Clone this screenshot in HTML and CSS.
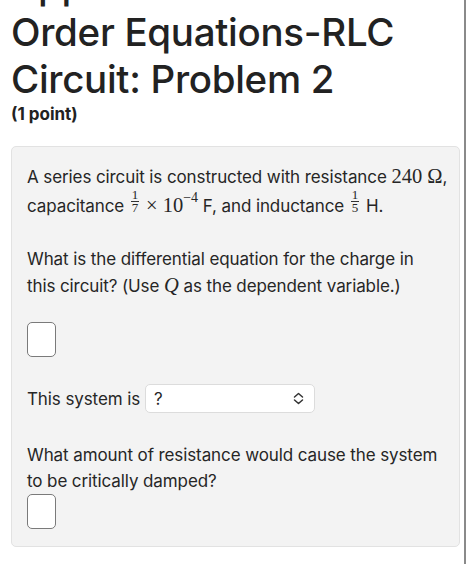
FILE: index.html
```html
<!DOCTYPE html>
<html>
<head>
<meta charset="utf-8">
<link rel="stylesheet" href="styles.css">
</head>
<body>
<div class="page">
  <h1 class="title">Applications of Second-<br>Order Equations-RLC<br>Circuit: Problem 2</h1>
  <div class="points">(1 point)</div>
  <div class="card">
    <p class="para">A series circuit is constructed with resistance <span class="m">240&nbsp;Ω</span>,<br>capacitance <span class="frac"><span class="num">1</span><span class="den">7</span></span> <span class="m">×&nbsp;10<sup>−4</sup></span> F, and inductance <span class="frac"><span class="num">1</span><span class="den">5</span></span> H.</p>
    <p class="para p2">What is the differential equation for the charge in<br>this circuit? (Use <span class="m mi">Q</span> as the dependent variable.)</p>
    <div class="answer"></div>
    <div class="system-row">This system is <span class="select"><span class="sel-val">?</span><svg class="chev" width="11" height="13" viewBox="0 0 11 13"><path d="M1.5 5 L5.5 1.5 L9.5 5 M1.5 8 L5.5 11.5 L9.5 8" fill="none" stroke="#333" stroke-width="1.5" stroke-linecap="round" stroke-linejoin="round"/></svg></span></div>
    <p class="para last">What amount of resistance would cause the system<br>to be critically damped?</p>
    <div class="answer small-gap"></div>
  </div>
</div>
</body>
</html>
```
FILE: styles.css
```css
html, body {
  margin: 0;
  padding: 0;
  background: #fff;
}
body {
  font-family: "Inter", "Liberation Sans", Arial, sans-serif;
  color: #262626;
  overflow: hidden;
}
.page {
  display: flow-root;
  width: 466px;
  height: 564px;
  box-sizing: border-box;
  border-right: 2px solid #8a8a8a;
  padding-left: 11px;
  padding-right: 4px;
  overflow: hidden;
}
.title {
  margin: -38px 0 0 0;
  font-size: 38.5px;
  line-height: 47px;
  font-weight: 500;
  color: #222;
  letter-spacing: -0.3px;
}
.points {
  margin-top: -1px;
  font-size: 17px;
  font-weight: 700;
  line-height: 24px;
  color: #222;
}
.card {
  margin-top: 20px;
  background: #f3f3f3;
  border: 1px solid #e2e2e2;
  border-radius: 5px;
  padding: 16px 15px 17px 15px;
  font-size: 17px;
  line-height: 26px;
  letter-spacing: -0.1px;
}
.para {
  margin: 0 0 27px 0;
  white-space: nowrap;
}
.para.p2 {
  margin-bottom: 23px;
}
.para.last {
  margin-bottom: 0;
}
.m {
  font-family: "Liberation Serif", "DejaVu Serif", serif;
  font-size: 20.5px;
  letter-spacing: 0;
}
.mi {
  font-style: italic;
}
.m sup {
  font-size: 14px;
  vertical-align: 0;
  position: relative;
  top: -10px;
  line-height: 0;
}
.frac {
  display: inline-flex;
  flex-direction: column;
  align-items: center;
  font-family: "Liberation Serif", "DejaVu Serif", serif;
  font-size: 13px;
  line-height: 10px;
  vertical-align: 13px;
  margin: 0 2px;
  letter-spacing: 0;
}
.frac .num {
  border-bottom: 1px solid #333;
  padding: 0 1px 1px;
}
.frac .den {
  padding-top: 1px;
}
.answer {
  width: 29px;
  height: 35px;
  box-sizing: border-box;
  border: 1.5px solid #7a7a7a;
  border-radius: 5px;
  background: #fff;
  margin-bottom: 27px;
}
.answer.small-gap {
  margin-bottom: 0;
}
.system-row {
  display: flex;
  align-items: center;
  gap: 5px;
  height: 29px;
  margin-bottom: 29px;
}
.select {
  display: flex;
  align-items: center;
  justify-content: space-between;
  width: 170px;
  height: 29px;
  box-sizing: border-box;
  border: 1px solid #dcdcdc;
  border-radius: 5px;
  background: #fff;
  padding: 0 10px 0 8px;
}
.chev {
  display: block;
}
```
